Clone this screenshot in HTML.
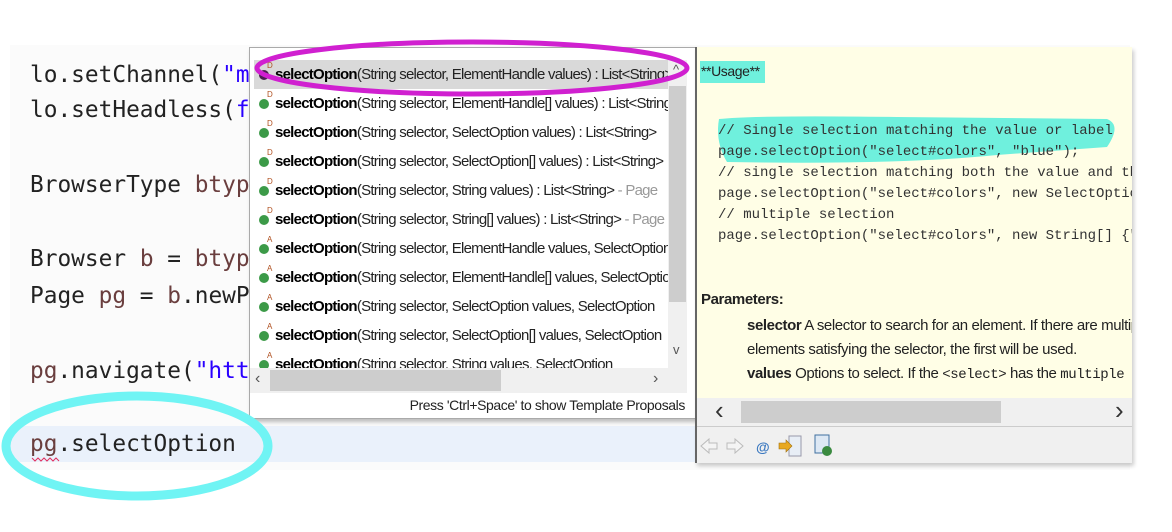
<!DOCTYPE html>
<html><head><meta charset="utf-8"><style>
body{margin:0;width:1172px;height:532px;background:#fff;position:relative;overflow:hidden;font-family:"Liberation Sans",sans-serif}
.ed{position:absolute;left:10px;top:45px;width:1120px;height:425px;background:#fbfbfb}
.cur{position:absolute;left:10px;top:426px;width:1120px;height:36px;background:#eaf1fb}
.code{position:absolute;left:30px;font-family:"DejaVu Sans Mono","Liberation Mono",monospace;font-size:22.8px;color:#222;white-space:pre;line-height:30px}
.v{color:#6a3e3e}.s{color:#2a00ff}
.pop{position:absolute;left:249px;top:47px;width:445px;height:370px;background:#fff;border:1px solid #aaa;box-shadow:2px 3px 4px rgba(0,0,0,.25);overflow:hidden}
.row{position:absolute;left:0;height:29px;width:418px;overflow:hidden;white-space:nowrap;font-size:15px;line-height:29px;color:#222;letter-spacing:-0.75px}
.row b{color:#000}
.row .g{color:#999}
.ic{display:inline-block;width:10px;height:10px;border-radius:50%;background:#3c9a48;margin:0 6px 0 9px;position:relative;vertical-align:-1px}
.ic:after{content:attr(data-l);position:absolute;left:8px;top:-8px;font-size:8px;color:#b05020;line-height:8px;letter-spacing:0}
.doc{position:absolute;left:695px;top:47px;width:435px;height:416px;background:#fffee6;border-left:2px solid #666;overflow:hidden;box-shadow:2px 3px 4px rgba(0,0,0,.2)}
.mono{position:absolute;left:21px;font-family:"Liberation Mono",monospace;font-size:14px;color:#333;white-space:pre;line-height:21px}
.dt{position:absolute;font-size:15px;color:#222;white-space:nowrap;letter-spacing:-0.4px}
</style></head><body>
<div class="ed"></div><div class="cur"></div>
<div class="code" style="top:60px">lo.setChannel(<span class="s">"m</span></div>
<div class="code" style="top:95px">lo.setHeadless(<span class="s">f</span></div>
<div class="code" style="top:170px">BrowserType <span class="v">btyp</span></div>
<div class="code" style="top:244px">Browser <span class="v">b</span> = <span class="v">btyp</span></div>
<div class="code" style="top:281px">Page <span class="v">pg</span> = <span class="v">b</span>.newP</div>
<div class="code" style="top:356px"><span class="v">pg</span>.navigate(<span class="s">"htt</span></div>
<div class="code" style="top:429px"><span class="v">pg</span>.selectOption</div>
<svg style="position:absolute;left:0;top:0" width="1172" height="532"><path d="M32 458 l3 3 3-3 3 3 3-3 3 3 3-3 3 3 3-3 3 3" stroke="#e03060" fill="none" stroke-width="1"/></svg>

<div class="pop">
<div style="position:absolute;left:4px;top:12px;width:414px;height:29px;background:#d9d9d9"></div>
<div class="row" style="top:12px"><span class="ic" style="background:#4a2050" data-l="D"></span><b>selectOption</b>(String selector, ElementHandle values) : List&lt;String&gt;</div>
<div class="row" style="top:41px"><span class="ic" data-l="D"></span><b>selectOption</b>(String selector, ElementHandle[] values) : List&lt;String&gt;</div>
<div class="row" style="top:70px"><span class="ic" data-l="D"></span><b>selectOption</b>(String selector, SelectOption values) : List&lt;String&gt;</div>
<div class="row" style="top:99px"><span class="ic" data-l="D"></span><b>selectOption</b>(String selector, SelectOption[] values) : List&lt;String&gt;</div>
<div class="row" style="top:128px"><span class="ic" data-l="D"></span><b>selectOption</b>(String selector, String values) : List&lt;String&gt; <span class="g">- Page</span></div>
<div class="row" style="top:157px"><span class="ic" data-l="D"></span><b>selectOption</b>(String selector, String[] values) : List&lt;String&gt; <span class="g">- Page</span></div>
<div class="row" style="top:186px"><span class="ic" data-l="A"></span><b>selectOption</b>(String selector, ElementHandle values, SelectOption</div>
<div class="row" style="top:215px"><span class="ic" data-l="A"></span><b>selectOption</b>(String selector, ElementHandle[] values, SelectOption</div>
<div class="row" style="top:244px"><span class="ic" data-l="A"></span><b>selectOption</b>(String selector, SelectOption values, SelectOption</div>
<div class="row" style="top:273px"><span class="ic" data-l="A"></span><b>selectOption</b>(String selector, SelectOption[] values, SelectOption</div>
<div class="row" style="top:302px;height:18px;line-height:29px"><span class="ic" data-l="A"></span><b>selectOption</b>(String selector, String values, SelectOption</div>
<div style="position:absolute;left:418px;top:12px;width:19px;height:308px;background:#f0f0f0"></div>
<div style="position:absolute;left:419px;top:38px;width:17px;height:216px;background:#cdcdcd"></div>
<div style="position:absolute;left:423px;top:14px;font-size:13px;color:#555">^</div>
<div style="position:absolute;left:423px;top:294px;font-size:13px;color:#555">v</div>
<div style="position:absolute;left:0;top:320px;width:437px;height:25px;background:#f0f0f0"></div>
<div style="position:absolute;left:20px;top:322px;width:231px;height:21px;background:#cdcdcd"></div>
<div style="position:absolute;left:5px;top:322px;font-size:16px;color:#555">‹</div>
<div style="position:absolute;left:403px;top:322px;font-size:16px;color:#555">›</div>
<div style="position:absolute;right:10px;top:349px;font-size:14px;color:#222;letter-spacing:-0.4px">Press 'Ctrl+Space' to show Template Proposals</div>
</div>

<div class="doc">
<div style="position:absolute;left:3px;top:14px;width:65px;height:22px;background:#6ff0dd"></div>
<div class="dt" style="left:4px;top:16px;font-size:14px">**Usage**</div>
<svg style="position:absolute;left:0;top:0" width="435" height="140"><path d="M22 72 Q60 68 200 70 L410 72 Q425 78 410 100 L300 108 Q200 118 30 115 Q18 95 22 72Z" fill="#6ff0dd"/></svg>
<div class="mono" style="top:74px">// Single selection matching the value or label
page.selectOption("select#colors", "blue");
// single selection matching both the value and the label
page.selectOption("select#colors", new SelectOption().setLabel("Blue"));
// multiple selection
page.selectOption("select#colors", new String[] {"red"});</div>
<div class="dt" style="left:4px;top:244px;font-weight:bold;font-size:15px">Parameters:</div>
<div class="dt" style="left:50px;top:270px"><b>selector</b> A selector to search for an element. If there are multiple</div>
<div class="dt" style="left:50px;top:294px">elements satisfying the selector, the first will be used.</div>
<div class="dt" style="left:50px;top:318px"><b>values</b> Options to select. If the <span style="font-family:'Liberation Mono',monospace;font-size:14px">&lt;select&gt;</span> has the <span style="font-family:'Liberation Mono',monospace;font-size:14px">multiple</span></div>
<div style="position:absolute;left:0;top:351px;width:435px;height:28px;background:#f0f0f0"></div>
<div style="position:absolute;left:44px;top:354px;width:260px;height:22px;background:#cdcdcd"></div>
<div style="position:absolute;left:18px;top:348px;font-size:26px;color:#333">‹</div>
<div style="position:absolute;left:418px;top:348px;font-size:26px;color:#333">›</div>
<div style="position:absolute;left:0;top:379px;width:435px;height:37px;background:#f0f0f0;border-top:1px solid #ccc"></div>
<svg style="position:absolute;left:0;top:380px" width="140" height="36">
<path d="M4 19 l8 -7 v4 h8 v6 h-8 v4z" fill="#f4f4f4" stroke="#bbb"/>
<path d="M46 19 l-8 -7 v4 h-8 v6 h8 v4z" fill="#f4f4f4" stroke="#bbb"/>
<text x="59" y="25" font-size="14" fill="#3a78c0" font-family="Liberation Sans" font-weight="bold">@</text>
<rect x="92" y="9" width="12" height="20" fill="#e8eef6" stroke="#99a"/>
<path d="M82 16 h7 v-3 l6 6 -6 6 v-3 h-7z" fill="#e8a820" stroke="#a07010" stroke-width=".6"/>
<rect x="118" y="8" width="14" height="18" fill="#dde8f4" stroke="#4070a0"/>
<circle cx="130" cy="24" r="5" fill="#3a8a40"/>
</svg>
</div>

<svg style="position:absolute;left:0;top:0" width="1172" height="532">
<ellipse cx="472" cy="68" rx="215" ry="26" fill="none" stroke="#d020d0" stroke-width="5"/>
<ellipse cx="137" cy="446" rx="131" ry="50" fill="none" stroke="#70f4f4" stroke-width="9"/>
</svg>
</body></html>
